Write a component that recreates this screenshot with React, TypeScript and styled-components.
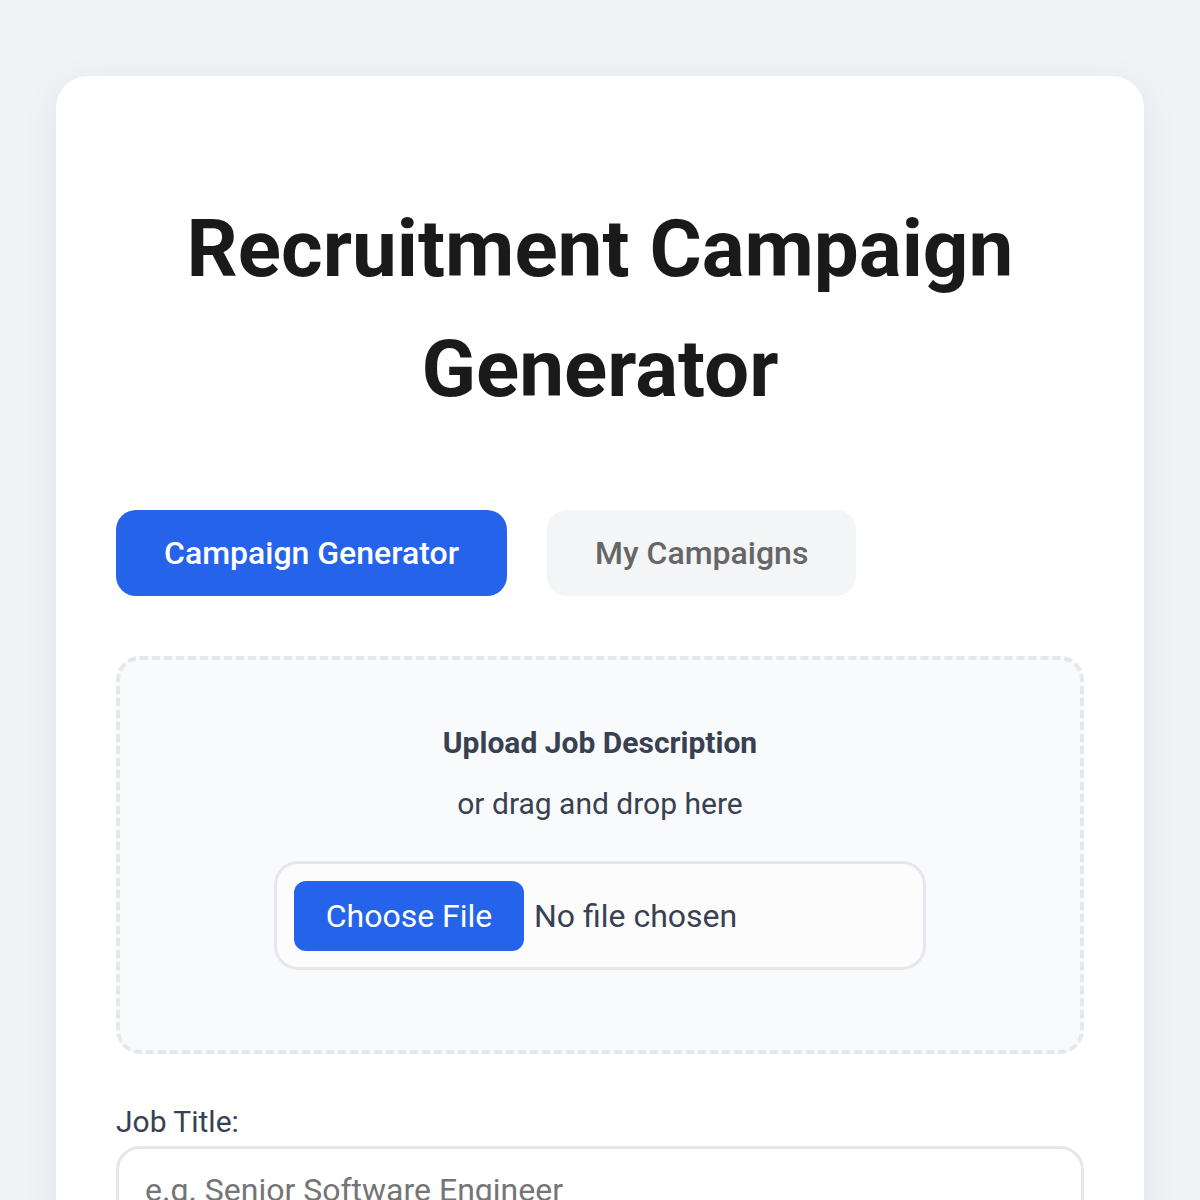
import React from "react";
import styled, { createGlobalStyle } from "styled-components";

const Global = createGlobalStyle`
  html, body {
    margin: 0;
    padding: 0;
    background: #f0f2f5;
    font-family: Roboto, "Liberation Sans", Arial, sans-serif;
  }
  * { box-sizing: border-box; }
`;

const Page = styled.div`
  padding: 76px 56px 60px;
`;

const Card = styled.main`
  background: #ffffff;
  border-radius: 32px;
  box-shadow: 0 8px 40px rgba(15, 23, 42, 0.06);
  padding: 60px 60px 80px;
`;

const Title = styled.h1`
  margin: 53px 0 81px;
  font-size: 80px;
  line-height: 1.5;
  font-weight: 700;
  color: #1a1a1a;
  text-align: center;
`;

const Tabs = styled.nav`
  display: flex;
  gap: 40px;
`;

const Tab = styled.button<{ $active?: boolean }>`
  height: 86px;
  padding: 0 48px;
  border: none;
  border-radius: 20px;
  font-family: inherit;
  font-size: 32px;
  font-weight: 500;
  cursor: pointer;
  background: ${(p) => (p.$active ? "#2563eb" : "#f4f5f7")};
  color: ${(p) => (p.$active ? "#ffffff" : "#666666")};
`;

const UploadBox = styled.section`
  margin-top: 60px;
  border: 4px dashed #e5e7eb;
  border-radius: 24px;
  background: #f9fafb;
  padding: 60px 60px 80px;
  display: flex;
  flex-direction: column;
  align-items: center;
`;

const UploadTitle = styled.div`
  font-size: 30px;
  line-height: 45px;
  font-weight: 700;
  color: #374151;
`;

const UploadHint = styled.p`
  margin: 16px 0 35px;
  font-size: 30px;
  line-height: 45px;
  color: #374151;
`;

const FileInput = styled.input`
  width: 652px;
  height: 109px;
  padding: 17px;
  border: 3px solid #e5e7eb;
  border-radius: 24px;
  background: #fcfcfd;
  font-family: inherit;
  font-size: 32px;
  color: #374151;

  &::file-selector-button {
    height: 70px;
    width: 230px;
    margin-right: 10px;
    border: none;
    border-radius: 12px;
    background: #2563eb;
    color: #ffffff;
    font-family: inherit;
    font-size: 32px;
    cursor: pointer;
  }
`;

const Label = styled.label`
  display: block;
  margin: 45px 0 2px;
  font-size: 30px;
  line-height: 45px;
  color: #374151;
`;

const TextInput = styled.input`
  display: block;
  width: 100%;
  padding: 22px 26px;
  border: 3px solid #e5e7eb;
  border-radius: 24px;
  font-family: inherit;
  font-size: 32px;
  line-height: 38px;
  color: #1a1a1a;
  background: #ffffff;

  &::placeholder {
    color: #757575;
  }
`;

export default function App() {
  return (
    <Page>
      <Global />
      <Card>
        <Title>Recruitment Campaign Generator</Title>
        <Tabs>
          <Tab $active>Campaign Generator</Tab>
          <Tab>My Campaigns</Tab>
        </Tabs>
        <UploadBox>
          <UploadTitle>Upload Job Description</UploadTitle>
          <UploadHint>or drag and drop here</UploadHint>
          <FileInput type="file" />
        </UploadBox>
        <Label htmlFor="job-title">Job Title:</Label>
        <TextInput id="job-title" placeholder="e.g. Senior Software Engineer" />
      </Card>
    </Page>
  );
}
